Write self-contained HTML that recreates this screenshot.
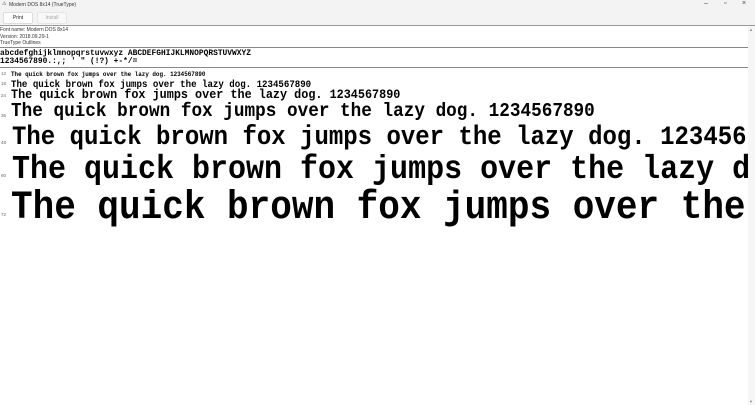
<!DOCTYPE html>
<html><head><style>
body{margin:0;width:755px;height:405px;background:#fff;position:relative;overflow:hidden;font-family:"Liberation Sans",sans-serif}
.a{position:absolute;white-space:pre}
.m{font-family:"Liberation Mono",monospace;font-weight:bold;color:#000;line-height:1;transform-origin:0 0.767em}
.n{position:absolute;left:1px;font-size:4.5px;color:#666}
</style></head><body>
<div class="a" style="left:0;top:0;width:755px;height:25px;background:#f3f3f3;border-bottom:1px solid #999"></div>
<div class="a" style="left:2px;top:1px;font-size:5px;color:#555">⚠</div>
<div class="a" style="left:9px;top:2px;font-size:5px;color:#333">Modern DOS 8x14 (TrueType)</div>
<div class="a" style="left:704px;top:0px;font-size:7px;color:#444">–</div>
<div class="a" style="left:724px;top:0px;font-size:7px;color:#444">▫</div>
<div class="a" style="left:742px;top:0px;font-size:7px;color:#444">×</div>
<div class="a" style="left:3px;top:12px;width:28px;height:10px;background:#fff;border:1px solid #ddd;border-radius:2px;font-size:5px;text-align:center;line-height:10px;color:#222">Print</div>
<div class="a" style="left:37px;top:12px;width:28px;height:10px;background:#f8f8f8;border:1px solid #e6e6e6;border-radius:2px;font-size:5px;text-align:center;line-height:10px;color:#aaa">Install</div>
<div class="a" style="left:0;top:27px;font-size:5px;line-height:6.5px;color:#333">Font name: Modern DOS 8x14
Version: 2018.09.29-1
TrueType Outlines</div>
<div class="a" style="left:0;top:47px;width:748px;height:1px;background:#888"></div>
<div class="a" style="left:0;top:67px;width:748px;height:1px;background:#888"></div>
<div class="a m" style="left:0;top:50px;font-size:7.9px;transform:scaleY(1.05)">abcdefghijklmnopqrstuvwxyz ABCDEFGHIJKLMNOPQRSTUVWXYZ</div>
<div class="a m" style="left:0;top:58px;font-size:7.9px;transform:scaleY(1.05)">1234567890.:,; ' " (!?) +-*/=</div>

<div class="n" style="top:71px">12</div>
<div class="a m" style="left:11px;top:71.5px;font-size:5.9px;transform:scaleY(1.1)">The quick brown fox jumps over the lazy dog. 1234567890</div>
<div class="n" style="top:81px">18</div>
<div class="a m" style="left:11px;top:79.5px;font-size:9.1px;transform:scaleY(1.12)">The quick brown fox jumps over the lazy dog. 1234567890</div>
<div class="n" style="top:93px">24</div>
<div class="a m" style="left:11px;top:89.5px;font-size:11.8px;transform:scaleY(1.12)">The quick brown fox jumps over the lazy dog. 1234567890</div>
<div class="n" style="top:113px">36</div>
<div class="a m" style="left:11px;top:104px;font-size:17.7px;transform:scaleY(1.12)">The quick brown fox jumps over the lazy dog. 1234567890</div>
<div class="n" style="top:140px">48</div>
<div class="a m" style="left:12px;top:127px;font-size:24px;transform:scaleY(1.12)">The quick brown fox jumps over the lazy dog. 1234567890</div>
<div class="n" style="top:173px">60</div>
<div class="a m" style="left:12px;top:155.5px;font-size:30px;transform:scaleY(1.12)">The quick brown fox jumps over the lazy dog. 1234567890</div>
<div class="n" style="top:212px">72</div>
<div class="a m" style="left:11px;top:191px;font-size:36px;transform:scaleY(1.1)">The quick brown fox jumps over the lazy dog. 1234567890</div>
<div class="a" style="left:748px;top:26px;width:7px;height:379px;background:#f6f6f6"></div>
<div class="a" style="left:749px;top:27px;font-size:4px;color:#888">▲</div>
<div class="a" style="left:749px;top:399px;font-size:4px;color:#888">▼</div>
</body></html>
